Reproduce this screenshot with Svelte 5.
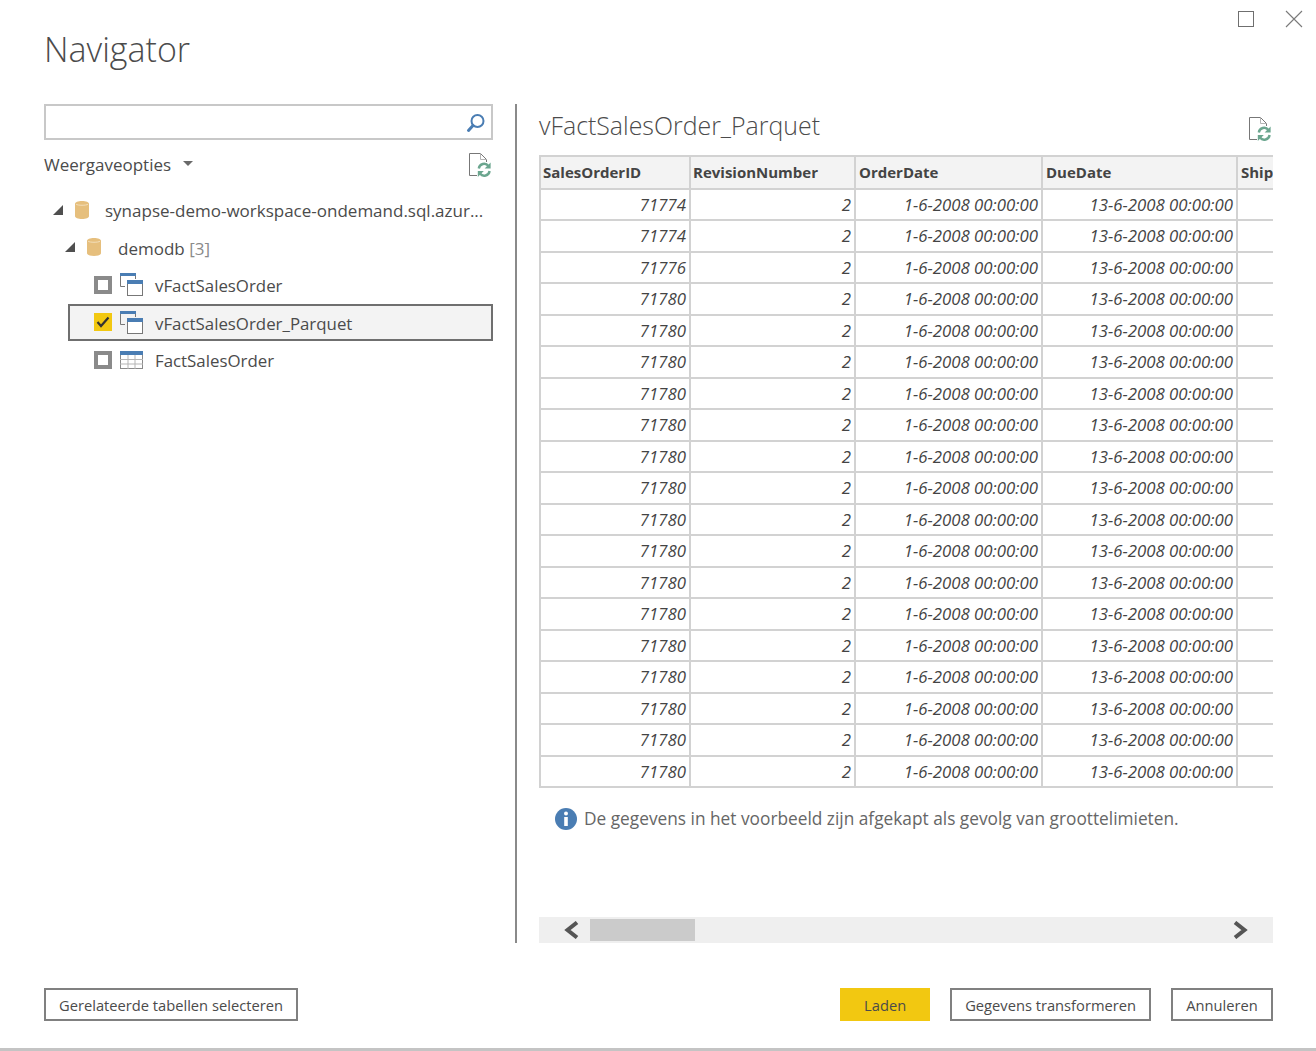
<script>
  const columns = [
    { key: "id", label: "SalesOrderID", width: 150 },
    { key: "rev", label: "RevisionNumber", width: 165 },
    { key: "order", label: "OrderDate", width: 187 },
    { key: "due", label: "DueDate", width: 195 },
    { key: "ship", label: "Ship", width: 120 }
  ];

  const ids = [71774, 71774, 71776, ...Array(16).fill(71780)];
  const rows = ids.map((id) => ({
    id,
    rev: 2,
    order: "1-6-2008 00:00:00",
    due: "13-6-2008 00:00:00",
    ship: ""
  }));
</script>

{#snippet refreshIcon()}
  <svg class="refresh" width="23" height="25" viewBox="0 0 23 25" fill="none">
    <path d="M.5 .5H11.5L17.5 6.5V9M.5 .5V22.5H8" stroke="#777" />
    <path d="M11.5 .5V6.5H17.5" stroke="#b5b5b5" />
    <path d="M9.8 15.5a5.4 5.4 0 0 1 9.6-2.6" stroke="#6ba68f" stroke-width="2.4" />
    <path d="M21.6 9.5v6h-6z" fill="#6ba68f" />
    <path d="M20.6 18a5.4 5.4 0 0 1-9.6 2.6" stroke="#6ba68f" stroke-width="2.4" />
    <path d="M8.8 24v-6h6z" fill="#6ba68f" />
  </svg>
{/snippet}

{#snippet dbIcon()}
  <svg width="14" height="18" viewBox="0 0 14 18">
    <path d="M0 3C0 1 3 0 7 0s7 1 7 3v12c0 2-3 3-7 3s-7-1-7-3z" fill="#e6bf7d" />
    <path d="M1 3.2C2.5 4.6 11.5 4.6 13 3.2" stroke="#f3dfbb" fill="none" />
  </svg>
{/snippet}

{#snippet viewIcon()}
  <svg width="23" height="23" viewBox="0 0 23 23" fill="none">
    <path d="M.5 3V13.5H5M.5 .5H15.5V6" stroke="#777" />
    <rect x="0" y="0" width="16" height="3" fill="#4a7db3" />
    <rect x="7.5" y="7.5" width="15" height="15" fill="#fff" stroke="#777" />
    <rect x="7" y="7" width="16" height="4" fill="#4a7db3" />
  </svg>
{/snippet}

{#snippet tableIcon()}
  <svg width="23" height="18" viewBox="0 0 23 18" fill="none">
    <rect x=".5" y=".5" width="22" height="17" stroke="#8a8a8a" />
    <path d="M8 4v14M15 4v14M0 8.5h23M0 13h23" stroke="#b5b5b5" />
    <rect x="0" y="0" width="23" height="4" fill="#4a7db3" />
  </svg>
{/snippet}

<div class="dialog">
  <div class="window-buttons">
    <svg width="16" height="16" viewBox="0 0 16 16" fill="none">
      <rect x=".5" y=".5" width="15" height="15" stroke="#6f6f6f" />
    </svg>
    <svg width="18" height="18" viewBox="0 0 18 18" fill="none">
      <path d="M1 1L17 17M17 1L1 17" stroke="#7a7a7a" stroke-width="1.1" />
    </svg>
  </div>

  <h1>Navigator</h1>

  <div class="main">
    <section class="left">
      <div class="search">
        <svg width="20" height="21" viewBox="0 0 20 21" fill="none">
          <circle cx="11.5" cy="9" r="6" stroke="#4a7db3" stroke-width="2" />
          <path d="M7 13.5L2.5 18.5" stroke="#4a7db3" stroke-width="3" stroke-linecap="round" />
        </svg>
      </div>

      <div class="options">
        <span class="options-label">Weergaveopties <i class="caret"></i></span>
        {@render refreshIcon()}
      </div>

      <ul class="tree">
        <li class="node server">
          <i class="arrow"></i>
          {@render dbIcon()}
          <span class="name">synapse-demo-workspace-ondemand.sql.azur...</span>
        </li>
        <li class="node database">
          <i class="arrow"></i>
          {@render dbIcon()}
          <span class="name">demodb <span class="count">[3]</span></span>
        </li>
        <li class="node item">
          <i class="box"></i>
          {@render viewIcon()}
          <span class="name">vFactSalesOrder</span>
        </li>
        <li class="node item selected">
          <i class="box checked">
            <svg width="14" height="12" viewBox="0 0 14 12" fill="none">
              <path d="M1.5 6L5 10L12.5 1.5" stroke="#333" stroke-width="2.2" />
            </svg>
          </i>
          {@render viewIcon()}
          <span class="name">vFactSalesOrder_Parquet</span>
        </li>
        <li class="node item">
          <i class="box"></i>
          {@render tableIcon()}
          <span class="name">FactSalesOrder</span>
        </li>
      </ul>
    </section>

    <section class="right">
      <div class="preview-head">
        <h2>vFactSalesOrder_Parquet</h2>
        {@render refreshIcon()}
      </div>

      <div class="table-clip">
        <table>
          <thead>
            <tr>
              {#each columns as col}
                <th style="width: {col.width}px">{col.label}</th>
              {/each}
            </tr>
          </thead>
          <tbody>
            {#each rows as row}
              <tr>
                {#each columns as col}
                  <td>{row[col.key]}</td>
                {/each}
              </tr>
            {/each}
          </tbody>
        </table>
      </div>

      <div class="notice">
        <svg width="22" height="22" viewBox="0 0 22 22">
          <circle cx="11" cy="11" r="11" fill="#4a7db3" />
          <rect x="9.2" y="9" width="3.6" height="9" fill="#fff" />
          <circle cx="11" cy="5.6" r="2" fill="#fff" />
        </svg>
        <span>De gegevens in het voorbeeld zijn afgekapt als gevolg van groottelimieten.</span>
      </div>

      <div class="scrollbar">
        <svg class="chev" width="15" height="18" viewBox="0 0 15 18" fill="none">
          <path d="M13 1.5L3.5 9L13 16.5" stroke="#555" stroke-width="4" />
        </svg>
        <div class="thumb"></div>
        <svg class="chev end" width="15" height="18" viewBox="0 0 15 18" fill="none">
          <path d="M2 1.5L11.5 9L2 16.5" stroke="#555" stroke-width="4" />
        </svg>
      </div>
    </section>
  </div>

  <footer>
    <button>Gerelateerde tabellen selecteren</button>
    <div class="actions">
      <button class="primary">Laden</button>
      <button>Gegevens transformeren</button>
      <button class="cancel">Annuleren</button>
    </div>
  </footer>
</div>

<style>
  :global(body) {
    background: #fff;
    overflow: hidden;
  }

  .dialog {
    position: relative;
    box-sizing: border-box;
    height: 1051px;
    padding: 0 43px 0 44px;
    border-bottom: 3px solid #c4c4c4;
    font-family: "Open Sans", "Noto Sans", sans-serif;
    font-size: 17px;
    color: #4b4b4b;
  }

  .window-buttons {
    position: absolute;
    top: 10px;
    right: 13px;
    display: flex;
    align-items: flex-start;
    gap: 31px;
  }

  .window-buttons svg:first-child {
    margin-top: 1px;
  }

  h1 {
    margin: 0;
    padding-top: 27px;
    height: 104px;
    box-sizing: border-box;
    font-size: 34px;
    font-weight: 300;
    line-height: 44px;
  }

  .main {
    display: flex;
    height: 839px;
  }

  .left {
    box-sizing: border-box;
    width: 473px;
    border-right: 2px solid #8a8a8a;
    padding-right: 22px;
    flex: none;
  }

  .search {
    box-sizing: border-box;
    height: 36px;
    border: 2px solid #c8c8c8;
    display: flex;
    justify-content: flex-end;
    align-items: center;
    padding-right: 5px;
  }

  .options {
    display: flex;
    justify-content: space-between;
    align-items: center;
    height: 26px;
    margin-top: 12px;
    padding-right: 1px;
  }

  .options-label {
    display: flex;
    align-items: center;
    gap: 12px;
    margin-top: -2px;
  }

  .caret {
    border: 5px solid transparent;
    border-top: 5px solid #6a6a6a;
    margin-top: 4px;
  }

  .refresh {
    flex: none;
  }

  .tree {
    list-style: none;
    margin: 13px 0 0;
    padding: 0;
  }

  .node {
    display: flex;
    align-items: center;
    height: 37.5px;
    box-sizing: border-box;
  }

  .name {
    margin-top: 2px;
  }

  .arrow {
    width: 0;
    height: 0;
    border-bottom: 10px solid #4f4f4f;
    border-left: 10px solid transparent;
    flex: none;
  }

  .server {
    padding-left: 9px;
  }

  .server svg,
  .database svg {
    margin-left: 12px;
  }

  .server .name {
    margin-left: 16px;
  }

  .database {
    padding-left: 21px;
  }

  .database .name {
    margin-left: 17px;
  }

  .count {
    color: #8a8a8a;
  }

  .item {
    padding-left: 50px;
    font-size: 16.85px;
  }

  .item svg {
    flex: none;
  }

  .item .name {
    margin-left: 12px;
  }

  .box {
    box-sizing: border-box;
    display: flex;
    align-items: center;
    justify-content: center;
    width: 18px;
    height: 18px;
    border: 4px solid #8a8a8a;
    margin-right: 8px;
    flex: none;
  }

  .box.checked {
    border: none;
    background: #f2c811;
  }

  .selected {
    margin-left: 24px;
    padding-left: 24px;
    border: 2px solid #6f6f6f;
    background: #f3f3f3;
  }

  .right {
    flex: 1;
    min-width: 0;
    padding-left: 22px;
    display: flex;
    flex-direction: column;
  }

  .preview-head {
    display: flex;
    justify-content: space-between;
    align-items: flex-end;
    height: 51px;
  }

  h2 {
    margin: 0 0 14px;
    font-size: 24.9px;
    font-weight: 300;
    line-height: 32px;
  }

  .preview-head .refresh {
    margin-right: 1px;
    margin-bottom: 13px;
  }

  .table-clip {
    overflow: hidden;
  }

  table {
    table-layout: fixed;
    width: 817px;
    border-collapse: collapse;
  }

  th,
  td {
    border: 2px solid #d2d2d2;
    padding: 0 2px;
    white-space: nowrap;
    overflow: hidden;
    box-sizing: border-box;
  }

  th {
    height: 32.5px;
    padding-bottom: 1px;
    background: #f3f3f3;
    text-align: left;
    font-size: 15px;
    font-weight: 700;
    color: #444;
  }

  th + th + th {
    padding-left: 3px;
  }

  td {
    height: 31.5px;
    padding-right: 3px;
    text-align: right;
    font-size: 16.8px;
    font-style: italic;
    color: #444;
  }

  .notice {
    display: flex;
    align-items: center;
    gap: 7px;
    margin: 19px 0 0 16px;
    font-size: 17.3px;
    color: #666;
  }

  .scrollbar {
    margin-top: auto;
    display: flex;
    align-items: center;
    height: 26px;
    background: #efefef;
    padding: 0 25px;
  }

  .thumb {
    width: 105px;
    height: 22px;
    background: #cbcbcb;
    margin-left: 11px;
    margin-right: auto;
  }

  footer {
    display: flex;
    justify-content: space-between;
    margin-top: 45px;
  }

  .actions {
    display: flex;
    gap: 20px;
  }

  button {
    box-sizing: border-box;
    height: 33px;
    padding: 0 13px;
    background: #fff;
    border: 2px solid #808080;
    font-family: inherit;
    font-size: 14.7px;
    color: #4b4b4b;
  }

  button.primary {
    width: 90px;
    background: #f2c811;
    border: none;
  }

  button.cancel {
    width: 102px;
    padding: 0;
  }
</style>
